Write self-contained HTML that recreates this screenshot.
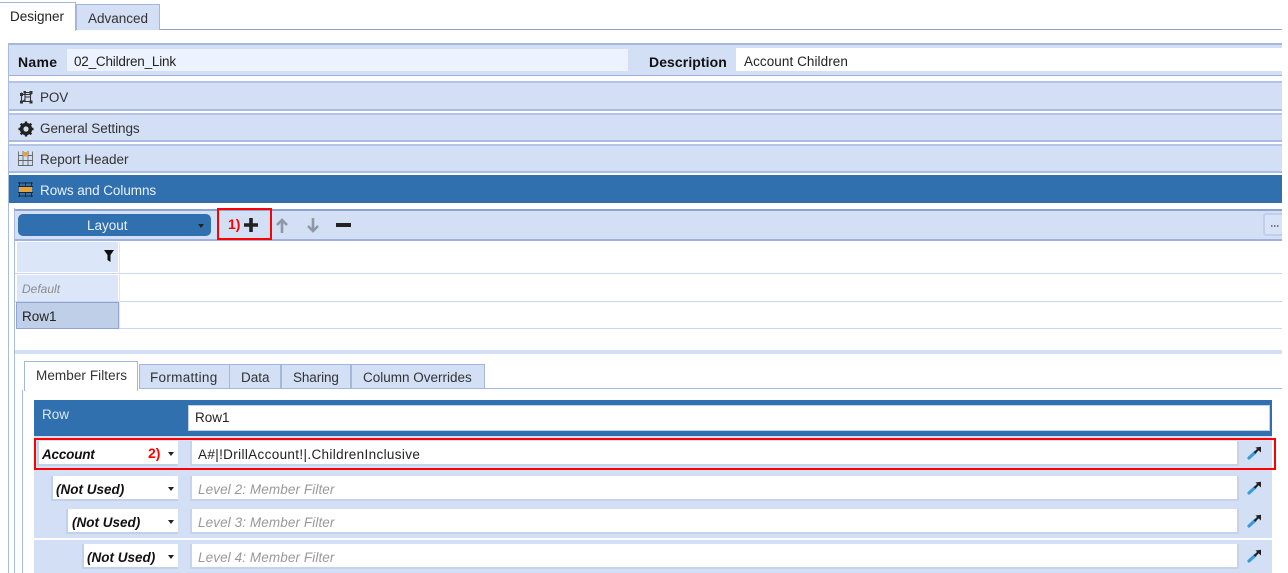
<!DOCTYPE html>
<html><head><meta charset="utf-8"><style>
html,body{margin:0;padding:0;background:#fff}
#p{position:relative;width:1288px;height:573px;overflow:hidden;background:#fff;font-family:"Liberation Sans",sans-serif;font-size:13.5px;color:#222}
#p div,#p span.t,#p svg{position:absolute}
.t{white-space:nowrap;line-height:18px;position:absolute}
.b{font-weight:bold;font-style:italic;color:#111;font-size:13.5px}
.ph{font-style:italic;color:#999;letter-spacing:.1px}
.sec{left:9px;width:1273px;height:26px;background:#d3dff5;border-top:2px solid #b4c4e6;border-bottom:2px solid #a9bce0}
.tab{top:364px;height:23px;background:#d3dff5;border:1px solid #a3b7d9;box-sizing:content-box}
.sel{background:#fff;border:1px solid #c3d0ea;border-left-width:2px;border-top-width:0;border-bottom-width:2px;border-right-width:0;box-sizing:border-box;height:25px}
.inp{left:190px;width:1049px;height:25px;background:#fff;border:1px solid #c7d3ec;border-width:0 2px 2px 2px;box-sizing:border-box}
.car{width:0;height:0;border-left:3.5px solid transparent;border-right:3.5px solid transparent;border-top:4px solid #222}
</style></head><body><div id="p">
<!-- top tabs -->
<div style="left:76px;top:29px;width:1206px;height:1px;background:#8fa3c4"></div>
<div style="left:0;top:2px;width:75px;height:28px;background:#fff;border-top:1px solid #a3b7d9;border-right:1px solid #a3b7d9"></div>
<div style="left:76px;top:4px;width:82px;height:25px;background:#d3dff5;border:1px solid #a3b7d9;border-bottom:0"></div>
<span class="t" style="left:10px;top:8px">Designer</span>
<span class="t" style="left:88px;top:10px;color:#333">Advanced</span>
<!-- left rail -->
<div style="left:8px;top:43px;width:1px;height:530px;background:#a9bce0"></div>
<!-- name panel -->
<div style="left:9px;top:43px;width:1273px;height:33px;background:#d3dff5;border-top:2px solid #a3b7e0;border-bottom:1px solid #9db0d8;box-sizing:border-box"></div>
<div style="left:67px;top:49px;width:561px;height:22px;background:#ecf2fe"></div>
<div style="left:736px;top:48px;width:546px;height:23px;background:#fff"></div>
<span class="t" style="left:18px;top:53px;font-weight:bold;color:#111;font-size:14px;letter-spacing:.3px">Name</span>
<span class="t" style="left:74px;top:53px;letter-spacing:-.2px">02_Children_Link</span>
<span class="t" style="left:649px;top:53px;font-weight:bold;color:#111;font-size:14px;letter-spacing:.08px">Description</span>
<span class="t" style="left:744px;top:53px;letter-spacing:.07px">Account Children</span>
<!-- sections -->
<div class="sec" style="top:81px"></div>
<div class="sec" style="top:113px;height:25px"></div>
<div class="sec" style="top:144px;height:25px"></div>
<div style="left:9px;top:175px;width:1273px;height:28px;background:#3070ae"></div>
<span class="t" style="left:40px;top:89px;color:#333;letter-spacing:-.1px">POV</span>
<span class="t" style="left:40px;top:120px;color:#333;letter-spacing:-.06px">General Settings</span>
<span class="t" style="left:40px;top:151px;color:#333">Report Header</span>
<span class="t" style="left:40px;top:182px;color:#e8f0fb;letter-spacing:-.06px">Rows and Columns</span>
<svg style="left:19px;top:90px" width="15" height="15" viewBox="0 0 15 15" fill="none" stroke="#333" stroke-width="1.1"><path d="M2 4.500h10.500M2 11.500h10.500M2.500 2.500v10.500M11.500 1.500v10.500M5 2.500h8M6 3v8M6 7h5.500M6 9.500l-3 2.500"/><g fill="#333" stroke="none"><rect x="1" y="3" width="3" height="3"/><rect x="1" y="10.500" width="3" height="3"/><rect x="10.500" y="1" width="3" height="3"/><rect x="10.500" y="10.500" width="3" height="3"/><rect x="4.500" y="1" width="2.500" height="2.500"/></g></svg>
<svg style="left:18px;top:121px" width="16" height="16" viewBox="0 0 16 16"><circle cx="8" cy="8" r="4.700" fill="none" stroke="#222" stroke-width="3"/><path d="M8 .5v15M.5 8h15M2.700 2.700l10.600 10.600M13.300 2.700L2.700 13.300" stroke="#222" stroke-width="2.400"/><circle cx="8" cy="8" r="2.600" fill="#d3dff5"/></svg>
<svg style="left:18px;top:151px" width="15" height="15" viewBox="0 0 15 15" fill="none" stroke="#666" stroke-width=".9"><path d="M.5 .5v14h14V.5M0 4.500h15M0 9.500h15M5 0v15M10 0v15"/><rect x="5" y="1" width="5" height="4.500" fill="#e6a23c" stroke="none"/></svg>
<svg style="left:18px;top:182px" width="15" height="15" viewBox="0 0 15 15" fill="none" stroke="#1b2733" stroke-width=".9"><path d="M0 1h15M0 4.500h15M0 10.500h15M0 14h15M1.500 0v15M13.500 0v15M7.500 0v4.500M7.500 10.500v4.500"/><rect x="1" y="5" width="13" height="5" fill="#e6a23c" stroke="none"/></svg>
<!-- inner rail -->
<div style="left:14px;top:208px;width:1px;height:365px;background:#a9bce0"></div>
<div style="left:22px;top:390px;width:1px;height:183px;background:#a9bce0"></div>
<!-- toolbar -->
<div style="left:15px;top:209px;width:1267px;height:32px;background:#d3dff5;border-top:2px solid #8ba3d2;border-bottom:2px solid #9db2de;box-sizing:border-box"></div>
<div style="left:18px;top:214px;width:193px;height:22px;background:#3070ae;border-radius:5px"></div>
<span class="t" style="left:87px;top:217px;color:#e8f0fb">Layout</span>
<div class="car" style="left:198px;top:224px"></div>
<div style="left:217px;top:208px;width:55px;height:32px;border:2px solid #f00;box-sizing:border-box"></div>
<span class="t" style="left:228px;top:215px;color:#f00;font-weight:bold;font-size:14px">1)</span>
<svg style="left:244px;top:218px" width="14" height="14" viewBox="0 0 14 14"><path d="M7 0v14M0 7h14" stroke="#222" stroke-width="3.600"/></svg>
<svg style="left:276px;top:218px" width="12" height="15" viewBox="0 0 12 15" fill="none" stroke="#8f98a5" stroke-width="2.600"><path d="M6 15V2M1 7l5-5 5 5"/></svg>
<svg style="left:307px;top:218px" width="12" height="15" viewBox="0 0 12 15" fill="none" stroke="#8f98a5" stroke-width="2.600"><path d="M6 0v13M1 8l5 5 5-5"/></svg>
<div style="left:336px;top:223px;width:15px;height:4px;background:#222"></div>
<div style="left:1263px;top:213px;width:19px;height:23px;background:#d8e3f7;border:2px solid #c0cee9;border-right:0;box-sizing:border-box;border-radius:3px 0 0 3px"></div>
<div style="left:1271px;top:225px;width:8px;height:2px;background:repeating-linear-gradient(90deg,#778 0 1.500px,transparent 1.500px 3px)"></div>
<!-- grid -->
<div style="left:17px;top:242px;width:101px;height:30px;background:#dbe6f8"></div>
<svg style="left:104px;top:250px" width="10" height="12" viewBox="0 0 10 12"><path d="M0 0h10L6.500 5v7L3.500 10V5z" fill="#111"/></svg>
<div style="left:15px;top:273px;width:1267px;height:1px;background:#c9d6ee"></div>
<div style="left:17px;top:275px;width:101px;height:26px;background:#dbe6f8"></div>
<span class="t" style="left:22px;top:280px;font-style:italic;color:#8c8c8c;font-size:12px">Default</span>
<div style="left:15px;top:301px;width:1267px;height:1px;background:#c9d6ee"></div>
<div style="left:16px;top:302px;width:103px;height:27px;background:#c0cfe8;border:1px solid #8fa5cf;box-sizing:border-box"></div>
<span class="t" style="left:22px;top:308px">Row1</span>
<div style="left:119px;top:328px;width:1163px;height:1px;background:#c9d6ee"></div>
<div style="left:119px;top:242px;width:1px;height:86px;background:#dbe6f8"></div>
<div style="left:15px;top:350px;width:1267px;height:4px;background:#d3dff5"></div>
<!-- tabs row -->
<div style="left:484px;top:388px;width:798px;height:1px;background:#a3b7d9"></div>
<div class="tab" style="left:139px;width:89px"></div>
<div class="tab" style="left:229px;width:50px"></div>
<div class="tab" style="left:281px;width:68px"></div>
<div class="tab" style="left:351px;width:132px"></div>
<div style="left:24px;top:361px;width:114px;height:30px;background:#fff;border:1px solid #a3b7d9;border-bottom:0;box-sizing:border-box"></div>
<span class="t" style="left:36px;top:367px;color:#333;letter-spacing:.08px">Member Filters</span>
<span class="t" style="left:150px;top:369px;color:#333;letter-spacing:.3px">Formatting</span>
<span class="t" style="left:241px;top:369px;color:#333">Data</span>
<span class="t" style="left:293px;top:369px;color:#333;letter-spacing:-.1px">Sharing</span>
<span class="t" style="left:363px;top:369px;color:#333">Column Overrides</span>
<!-- row panel -->
<div style="left:34px;top:400px;width:1238px;height:36px;background:#3070ae"></div>
<div style="left:188px;top:405px;width:1082px;height:26px;background:#fff;border:1px solid #c3d0ea;box-sizing:border-box"></div>
<span class="t" style="left:42px;top:406px;color:#dbe7f7">Row</span>
<span class="t" style="left:195px;top:409px">Row1</span>
<!-- member panel -->
<div style="left:34px;top:436px;width:1238px;height:102px;background:#d3dff5"></div>
<div style="left:34px;top:540px;width:1238px;height:33px;background:#d3dff5"></div>
<div class="sel" style="left:37px;top:441px;width:141px"></div>
<div class="sel" style="left:51px;top:476px;width:127px"></div>
<div class="sel" style="left:66px;top:509px;width:112px"></div>
<div class="sel" style="left:82px;top:544px;width:96px"></div>
<div class="inp" style="top:441px"></div>
<div class="inp" style="top:476px"></div>
<div class="inp" style="top:509px"></div>
<div class="inp" style="top:544px"></div>
<div class="car" style="left:168px;top:452px"></div>
<div class="car" style="left:168px;top:487px"></div>
<div class="car" style="left:168px;top:520px"></div>
<div class="car" style="left:168px;top:555px"></div>
<span class="t b" style="left:42px;top:446px;letter-spacing:-.2px">Account</span>
<span class="t" style="left:148px;top:444px;color:#f00;font-weight:bold;font-size:14px">2)</span>
<span class="t b" style="left:56px;top:481px">(Not Used)</span>
<span class="t b" style="left:72px;top:514px">(Not Used)</span>
<span class="t b" style="left:87px;top:549px">(Not Used)</span>
<span class="t" style="left:198px;top:446px;letter-spacing:.35px">A#|!DrillAccount!|.ChildrenInclusive</span>
<span class="t ph" style="left:198px;top:481px">Level 2: Member Filter</span>
<span class="t ph" style="left:198px;top:514px">Level 3: Member Filter</span>
<span class="t ph" style="left:198px;top:549px">Level 4: Member Filter</span>
<svg style="left:1247px;top:446px" width="15" height="14" viewBox="0 0 15 14"><path d="M2 12L8 6.500" stroke="#3a9ad9" stroke-width="3.200" stroke-linecap="round"/><path d="M7.500 7L11.500 3" stroke="#222" stroke-width="2.200"/><path d="M8.500 1.500L14 .8V6.500z" fill="#222"/></svg>
<svg style="left:1247px;top:481px" width="15" height="14" viewBox="0 0 15 14"><path d="M2 12L8 6.500" stroke="#3a9ad9" stroke-width="3.200" stroke-linecap="round"/><path d="M7.500 7L11.500 3" stroke="#222" stroke-width="2.200"/><path d="M8.500 1.500L14 .8V6.500z" fill="#222"/></svg>
<svg style="left:1247px;top:514px" width="15" height="14" viewBox="0 0 15 14"><path d="M2 12L8 6.500" stroke="#3a9ad9" stroke-width="3.200" stroke-linecap="round"/><path d="M7.500 7L11.500 3" stroke="#222" stroke-width="2.200"/><path d="M8.500 1.500L14 .8V6.500z" fill="#222"/></svg>
<svg style="left:1247px;top:549px" width="15" height="14" viewBox="0 0 15 14"><path d="M2 12L8 6.500" stroke="#3a9ad9" stroke-width="3.200" stroke-linecap="round"/><path d="M7.500 7L11.500 3" stroke="#222" stroke-width="2.200"/><path d="M8.500 1.500L14 .8V6.500z" fill="#222"/></svg>
<!-- red box 2 -->
<div style="left:34px;top:438px;width:1242px;height:32px;border:2px solid #f00;box-sizing:border-box"></div>
</div></body></html>
